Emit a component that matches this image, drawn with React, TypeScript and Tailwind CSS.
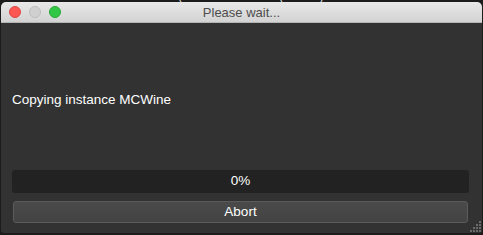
import React from "react";

export default function App() {
  return (
    <div
      className="w-[483px] h-[235px] bg-[#1c1c1c] overflow-hidden flex flex-col"
      style={{ fontFamily: '"Helvetica Neue", "Liberation Sans", Arial, sans-serif' }}
    >
      <div className="h-[2px] overflow-hidden relative shrink-0">
        <div className="absolute left-[178px] top-[-11px] text-[13px] text-[#d8d8d8] whitespace-pre leading-[13px]">
          {"(0.11.0         Mod (1.12.1)"}
        </div>
      </div>
      <div className="flex-1 mx-[1px] mb-[2px] rounded-t-[5px] rounded-b-[3px] overflow-hidden flex flex-col bg-[#323232]">
        <div className="h-[21px] shrink-0 relative flex items-center justify-center bg-gradient-to-b from-[#e8e8e8] to-[#d3d3d3] border-b border-[#b5b5b5]">
          <div className="absolute left-[8px] top-[4px] flex gap-[8px]">
            <div className="w-[12px] h-[12px] rounded-full bg-[#fc5753] border border-[#df4744]" />
            <div className="w-[12px] h-[12px] rounded-full bg-[#d0d0d0] border border-[#bdbdbd]" />
            <div className="w-[12px] h-[12px] rounded-full bg-[#33c748] border border-[#27aa35]" />
          </div>
          <span className="text-[13px] text-[#4d4d4d] leading-none">Please wait...</span>
        </div>
        <div className="flex-1 flex flex-col pl-[11px] pr-[13px] relative">
          <div className="flex-1 flex items-center">
            <span className="text-[13.5px] text-white mt-[8px]">Copying instance MCWine</span>
          </div>
          <div className="h-[23px] rounded-[3px] bg-[#222222] flex items-center justify-center text-[13.5px] text-white">
            0%
          </div>
          <div className="mt-[8px] mb-[10px] mx-[1px] h-[22px] rounded-[3px] border border-[#5c5c5c] bg-gradient-to-b from-[#4a4a4a] to-[#434343] flex items-center justify-center text-[13.5px] text-white">
            Abort
          </div>
          <svg className="absolute right-[1px] bottom-[1px]" width="11" height="11" viewBox="0 0 11 11">
            <g fill="#6a6a6a">
              <rect x="9" y="0" width="2" height="2" />
              <rect x="6" y="3" width="2" height="2" />
              <rect x="9" y="3" width="2" height="2" />
              <rect x="3" y="6" width="2" height="2" />
              <rect x="6" y="6" width="2" height="2" />
              <rect x="9" y="6" width="2" height="2" />
              <rect x="0" y="9" width="2" height="2" />
              <rect x="3" y="9" width="2" height="2" />
              <rect x="6" y="9" width="2" height="2" />
              <rect x="9" y="9" width="2" height="2" />
            </g>
          </svg>
        </div>
      </div>
    </div>
  );
}
